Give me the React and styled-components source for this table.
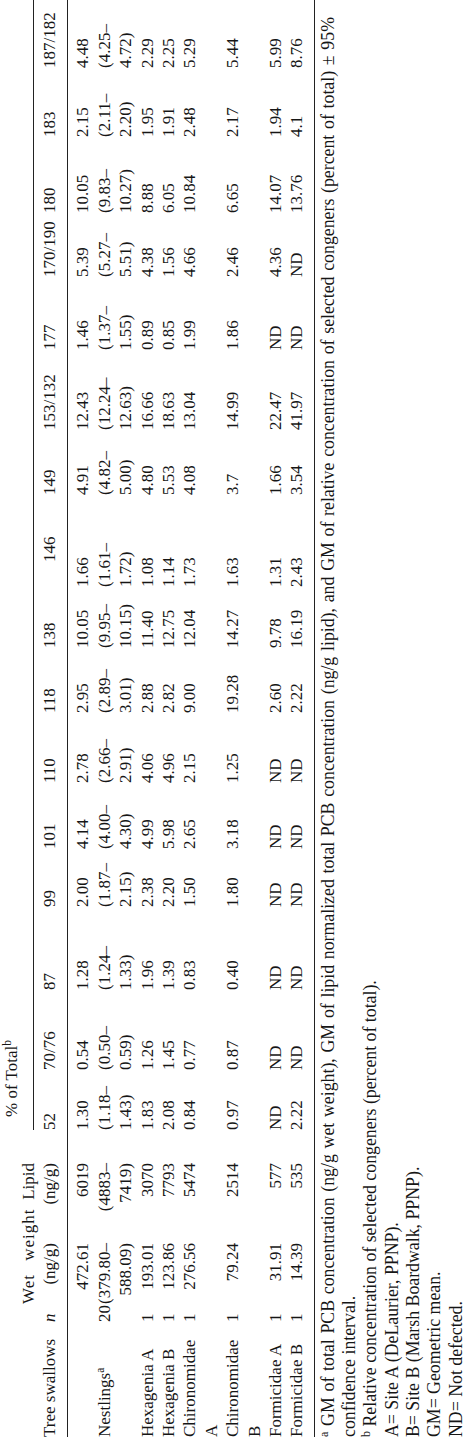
import React from 'react';
import styled, { createGlobalStyle } from 'styled-components';

const GlobalStyle = createGlobalStyle`
  html, body {
    margin: 0;
    padding: 0;
    background: #fff;
  }
  body {
    font-family: "Liberation Serif", "Times New Roman", serif;
    color: #161616;
  }
`;

const Page = styled.div`
  width: 474px;
  height: 1437px;
  overflow: hidden;
  background: #fff;
`;

// the table is printed sideways: lay it out flat, then turn it a quarter to the left
const Sheet = styled.div`
  width: 1437px;
  height: 474px;
  transform-origin: 0 0;
  transform: translateY(1437px) rotate(-90deg);
  font-size: 17px;
  line-height: 21.4px;
`;

const Table = styled.table`
  width: 1437px;
  table-layout: fixed;
  border-collapse: collapse;
  border-bottom: 1.5px solid #222;
`;

const Col = styled.col`
  width: ${p => p.$w}px;
`;

const Th = styled.th`
  font-weight: normal;
  padding: 0;
  text-align: ${p => p.$align || 'left'};
  vertical-align: bottom;
  white-space: nowrap;
`;

const Spanner = styled(Th)`
  padding: 1px 0 10.5px 13px;
  border-bottom: 1.5px solid #222;
`;

const ColHead = styled(Th)`
  padding: 5.5px ${p => p.$right || 0}px 6.5px ${p => p.$shift || 0}px;
  border-bottom: 1.5px solid #222;
`;

const Italic = styled.span`
  font-style: italic;
`;

const WideLabel = styled.span`
  display: inline-block;
  letter-spacing: 1px;
  word-spacing: 8px;
  margin-right: -34px;
`;

const Sup = styled.sup`
  font-size: 0.68em;
  line-height: 0;
  vertical-align: 0.5em;
`;

const Body = styled.tbody`
  tr:first-child td {
    padding-top: 4px;
  }
  tr:last-child td {
    padding-bottom: 6px;
  }
`;

const Td = styled.td`
  padding: 0 ${p => p.$right || 0}px 0 0;
  text-align: ${p => p.$align || 'left'};
  vertical-align: ${p => (p.$middle ? 'middle' : 'top')};
  white-space: nowrap;
`;

const Notes = styled.div`
  padding-top: 3px;
  font-size: 17.8px;
  line-height: 21.3px;
  white-space: nowrap;
  overflow: hidden;
`;

// first line of a justified paragraph, so its words sit a little further apart
const Note = styled.p`
  margin: 0;
  word-spacing: ${p => (p.$justified ? '1.3px' : 'normal')};
`;

const congeners = [
  { label: '52', w: 60 },
  { label: '70/76', w: 80 },
  { label: '87', w: 83 },
  { label: '99', w: 58 },
  { label: '101', w: 66 },
  { label: '110', w: 70 },
  { label: '118', w: 65 },
  { label: '138', w: 61 },
  { label: '146', w: 92, shift: 25 },
  { label: '149', w: 65 },
  { label: '153/132', w: 80 },
  { label: '177', w: 73 },
  { label: '170/190', w: 64 },
  { label: '180', w: 76 },
  { label: '183', w: 69 },
  { label: '187/182', w: 68 },
];

const nestlingLines = [
  '1.30 0.54 1.28 2.00 4.14 2.78 2.95 10.05 1.66 4.91 12.43 1.46 5.39 10.05 2.15 4.48',
  '(1.18– (0.50– (1.24– (1.87– (4.00– (2.66– (2.89– (9.95– (1.61– (4.82– (12.24– (1.37– (5.27– (9.83– (2.11– (4.25–',
  '1.43) 0.59) 1.33) 2.15) 4.30) 2.91) 3.01) 10.15) 1.72) 5.00) 12.63) 1.55) 5.51) 10.27) 2.20) 4.72)',
].map(l => l.split(' '));

const single = s => s.split(' ').map(v => [v]);

const rows = [
  {
    key: 'nestlings',
    name: [<>Nestlings<Sup>a</Sup></>],
    middle: true,
    n: '20',
    wet: ['472.61', '(379.80–', '588.09)'],
    lipid: ['6019', '(4883–', '7419)'],
    values: nestlingLines[0].map((_, i) => nestlingLines.map(l => l[i])),
  },
  {
    key: 'hexA',
    name: ['Hexagenia A'],
    n: '1',
    wet: ['193.01'],
    lipid: ['3070'],
    values: single('1.83 1.26 1.96 2.38 4.99 4.06 2.88 11.40 1.08 4.80 16.66 0.89 4.38 8.88 1.95 2.29'),
  },
  {
    key: 'hexB',
    name: ['Hexagenia B'],
    n: '1',
    wet: ['123.86'],
    lipid: ['7793'],
    values: single('2.08 1.45 1.39 2.20 5.98 4.96 2.82 12.75 1.14 5.53 18.63 0.85 1.56 6.05 1.91 2.25'),
  },
  {
    key: 'chiA',
    name: ['Chironomidae', 'A'],
    n: '1',
    wet: ['276.56'],
    lipid: ['5474'],
    values: single('0.84 0.77 0.83 1.50 2.65 2.15 9.00 12.04 1.73 4.08 13.04 1.99 4.66 10.84 2.48 5.29'),
  },
  {
    key: 'chiB',
    name: ['Chironomidae', 'B'],
    n: '1',
    wet: ['79.24'],
    lipid: ['2514'],
    values: single('0.97 0.87 0.40 1.80 3.18 1.25 19.28 14.27 1.63 3.7 14.99 1.86 2.46 6.65 2.17 5.44'),
  },
  {
    key: 'forA',
    name: ['Formicidae A'],
    n: '1',
    wet: ['31.91'],
    lipid: ['577'],
    values: single('ND ND ND ND ND ND 2.60 9.78 1.31 1.66 22.47 ND 4.36 14.07 1.94 5.99'),
  },
  {
    key: 'forB',
    name: ['Formicidae B'],
    n: '1',
    wet: ['14.39'],
    lipid: ['535'],
    values: single('2.22 ND ND ND ND ND 2.22 16.19 2.43 3.54 41.97 ND ND 13.76 4.1 8.76'),
  },
];

const Lines = ({ lines }) =>
  lines.map((l, i) => (
    <React.Fragment key={i}>
      {i > 0 && <br />}
      {l}
    </React.Fragment>
  ));

const App = () => {
  return (
    <Page>
      <GlobalStyle />
      <Sheet>
        <Table>
          <colgroup>
            <Col $w={115} />
            <Col $w={18} />
            <Col $w={65} />
            <Col $w={109} />
            {congeners.map(c => (
              <Col key={c.label} $w={c.w} />
            ))}
          </colgroup>
          <thead>
            <tr>
              <Th />
              <Th />
              <ColHead rowSpan={2} $align="right" $right={4}>
                <WideLabel>Wet weight</WideLabel>
                <br />
                (ng/g)
              </ColHead>
              <ColHead rowSpan={2} $align="right" $right={33}>
                Lipid
                <br />
                (ng/g)
              </ColHead>
              <Spanner colSpan={congeners.length}>
                % of Total<Sup>b</Sup>
              </Spanner>
            </tr>
            <tr>
              <ColHead>Tree swallows</ColHead>
              <ColHead>
                <Italic>n</Italic>
              </ColHead>
              {congeners.map(c => (
                <ColHead key={c.label} $shift={c.shift}>
                  {c.label}
                </ColHead>
              ))}
            </tr>
          </thead>
          <Body>
            {rows.map(r => (
              <tr key={r.key}>
                <Td $middle={r.middle}>
                  <Lines lines={r.name} />
                </Td>
                <Td $middle={r.middle}>{r.n}</Td>
                <Td $align="right" $right={4}>
                  <Lines lines={r.wet} />
                </Td>
                <Td $align="right" $right={33}>
                  <Lines lines={r.lipid} />
                </Td>
                {r.values.map((v, i) => (
                  <Td key={i}>
                    <Lines lines={v} />
                  </Td>
                ))}
              </tr>
            ))}
          </Body>
        </Table>
        <Notes>
          <Note $justified>
            <Sup>a</Sup> GM of total PCB concentration (ng/g wet weight), GM of lipid normalized total PCB
            concentration (ng/g lipid), and GM of relative concentration of selected congeners (percent of
            total) ± 95%
          </Note>
          <Note>confidence interval.</Note>
          <Note>
            <Sup>b</Sup> Relative concentration of selected congeners (percent of total).
          </Note>
          <Note>A= Site A (DeLaurier, PPNP).</Note>
          <Note>B= Site B (Marsh Boardwalk, PPNP).</Note>
          <Note>GM= Geometric mean.</Note>
          <Note>ND= Not defected.</Note>
        </Notes>
      </Sheet>
    </Page>
  );
};

export default App;
